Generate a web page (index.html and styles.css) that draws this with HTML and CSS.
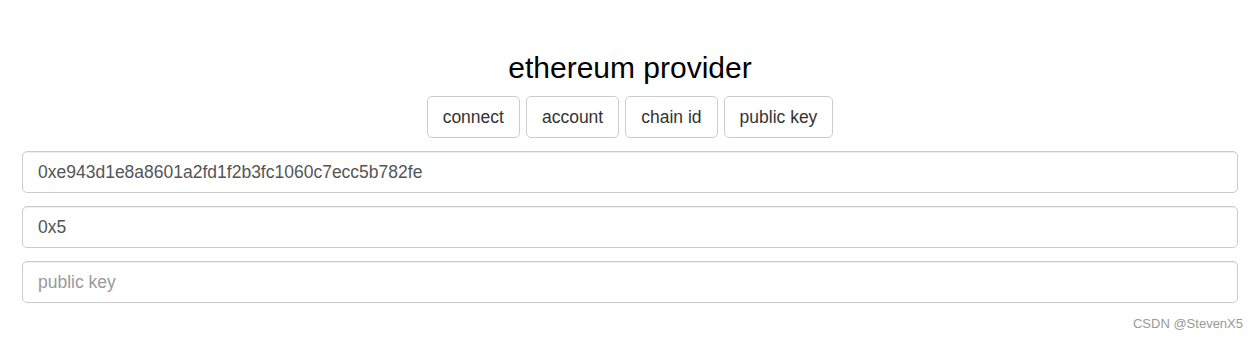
FILE: index.html
```html
<!DOCTYPE html>
<html lang="en">
<head>
    <meta charset="UTF-8">
    <meta name="viewport" content="width=device-width, initial-scale=1.0">
    <title>ethereum provider</title>
    <link rel="stylesheet" href="styles.css">
</head>
<body>
    <div class="container">
        <h3 class="title">ethereum provider</h3>
        <div class="actions">
            <button class="btn" id="connect">connect</button>
            <button class="btn" id="account">account</button>
            <button class="btn" id="chainId">chain id</button>
            <button class="btn" id="publicKey">public key</button>
        </div>
        <input class="field" type="text" id="accountOut" value="0xe943d1e8a8601a2fd1f2b3fc1060c7ecc5b782fe">
        <input class="field" type="text" id="chainOut" value="0x5">
        <input class="field" type="text" id="keyOut" placeholder="public key">
    </div>
    <div class="watermark">CSDN @StevenX5</div>
</body>
</html>
```

FILE: styles.css
```css
body {
    margin: 0;
    background-color: #fff;
    font-family: "Liberation Sans", Arial, sans-serif;
    color: #333;
}
.container {
    padding: 51px 20px 0 22px;
}
.title {
    margin: 0 0 12px;
    font-size: 30px;
    line-height: 33px;
    font-weight: normal;
    text-align: center;
    color: #000;
}
.actions {
    display: flex;
    justify-content: center;
    gap: 6px;
    margin-bottom: 13px;
}
.btn {
    font-family: inherit;
    font-size: 17.5px;
    line-height: 25px;
    padding: 7.5px 15px;
    color: #333;
    background-color: #fff;
    border: 1px solid #ccc;
    border-radius: 5px;
    cursor: pointer;
}
.field {
    display: block;
    box-sizing: border-box;
    width: 100%;
    height: 42px;
    margin-bottom: 13px;
    padding: 7.5px 15px;
    font-family: inherit;
    font-size: 17.5px;
    color: #555;
    border: 1px solid #ccc;
    border-radius: 5px;
    box-shadow: inset 0 1px 1px rgba(0, 0, 0, 0.075);
}
.field::placeholder {
    color: #999;
}
.watermark {
    text-align: right;
    padding-right: 15px;
    margin-top: 8px;
    font-size: 13px;
    color: #999;
}
```
